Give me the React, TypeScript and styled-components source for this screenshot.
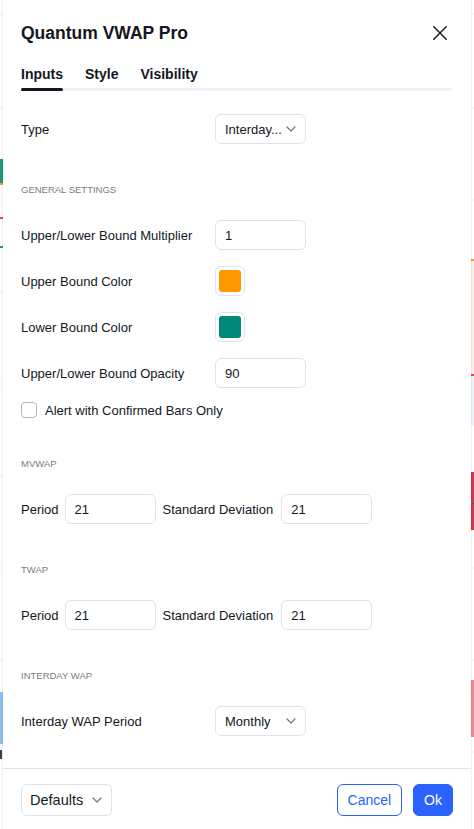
import React from "react";
import styled, { createGlobalStyle } from "styled-components";

const GlobalStyle = createGlobalStyle`
  html, body {
    margin: 0;
    padding: 0;
    background: #ffffff;
  }
  body {
    font-family: "Liberation Sans", Arial, sans-serif;
    color: #131722;
    overflow: hidden;
  }
  * {
    box-sizing: border-box;
  }
`;

const Page = styled.div`
  position: relative;
  width: 474px;
  height: 829px;
  overflow: hidden;
`;

const Backdrop = styled.svg`
  position: absolute;
  top: 0;
  left: 0;
  z-index: 0;
`;

const Dialog = styled.div`
  position: relative;
  z-index: 1;
  margin: 0 3px;
  height: 829px;
  background: #ffffff;
  box-shadow: 0 0 2px rgba(19, 23, 34, 0.18);
  display: flex;
  flex-direction: column;
`;

const Header = styled.div`
  display: flex;
  align-items: center;
  justify-content: space-between;
  padding: 20px 24px 0 18px;
  height: 46px;
`;

const Title = styled.h2`
  margin: 0;
  font-size: 17.5px;
  line-height: 26px;
  font-weight: 700;
  color: #131722;
`;

const CloseButton = styled.button`
  border: none;
  background: none;
  padding: 0;
  width: 14px;
  height: 14px;
  display: flex;
  cursor: pointer;
`;

const Tabs = styled.div`
  position: relative;
  margin: 18px 19px 0 18px;
  display: flex;
  gap: 22px;
  &::after {
    content: "";
    position: absolute;
    left: 0;
    right: 0;
    bottom: 0;
    height: 3px;
    background: #f0f3fa;
    border-radius: 2px;
  }
`;

const Tab = styled.div<{ $active?: boolean }>`
  position: relative;
  z-index: 1;
  font-size: 14px;
  font-weight: 700;
  line-height: 20px;
  padding-bottom: 7px;
  color: #131722;
  &::after {
    content: "";
    position: absolute;
    left: 0;
    right: 0;
    bottom: 0;
    height: 3px;
    border-radius: 2px;
    background: ${(p) => (p.$active ? "#131722" : "transparent")};
  }
`;

const Body = styled.div`
  flex: 1;
  padding: 23px 18px 0 18px;
  display: flex;
  flex-direction: column;
`;

const Section = styled.div<{ $top?: number }>`
  margin-top: ${(p) => p.$top ?? 38}px;
  display: flex;
  flex-direction: column;
`;

const SectionTitle = styled.div`
  font-size: 9.5px;
  line-height: 16px;
  text-transform: uppercase;
  color: #787b86;
  margin-bottom: 22px;
`;

const Rows = styled.div`
  display: flex;
  flex-direction: column;
  gap: 16px;
`;

const Row = styled.div`
  display: flex;
  align-items: center;
  height: 30px;
`;

const Label = styled.div`
  width: 194px;
  font-size: 13px;
  color: #131722;
`;

const InlineLabel = styled.div<{ $space?: number }>`
  font-size: 13px;
  color: #131722;
  margin-right: ${(p) => p.$space ?? 8}px;
`;

const Input = styled.div<{ $after?: number }>`
  width: 91px;
  height: 30px;
  border: 1px solid #e0e3eb;
  border-radius: 6px;
  padding: 0 9px;
  display: flex;
  align-items: center;
  font-size: 13px;
  color: #131722;
  margin-right: ${(p) => p.$after ?? 0}px;
`;

const Select = styled(Input)`
  justify-content: space-between;
  padding-right: 9px;
`;

const Swatch = styled.div`
  width: 30px;
  height: 30px;
  border: 1px solid #e0e3eb;
  border-radius: 6px;
  padding: 3px;
`;

const SwatchColor = styled.div<{ $color: string }>`
  width: 100%;
  height: 100%;
  border-radius: 3px;
  background: ${(p) => p.$color};
`;

const CheckRow = styled.label`
  margin-top: 10px;
  height: 24px;
  display: flex;
  align-items: center;
  gap: 8px;
  font-size: 13px;
  color: #131722;
`;

const CheckBox = styled.span`
  width: 16px;
  height: 16px;
  border: 1px solid #b2b5be;
  border-radius: 4px;
  display: inline-block;
`;

const Footer = styled.div`
  border-top: 1px solid #e0e3eb;
  padding: 15px 18px 13px 18px;
  display: flex;
  align-items: center;
`;

const FooterSelect = styled.div`
  width: 91px;
  height: 32px;
  border: 1px solid #e0e3eb;
  border-radius: 6px;
  padding: 0 9px 0 8px;
  display: flex;
  align-items: center;
  justify-content: space-between;
  font-size: 14.5px;
  color: #131722;
`;

const Actions = styled.div`
  margin-left: auto;
  display: flex;
  gap: 11px;
`;

const Button = styled.button<{ $primary?: boolean }>`
  height: 32px;
  padding: 0 10px;
  border-radius: 6px;
  font-family: "Liberation Sans", Arial, sans-serif;
  font-size: 14px;
  border: 1px solid #2962ff;
  background: ${(p) => (p.$primary ? "#2962ff" : "#ffffff")};
  color: ${(p) => (p.$primary ? "#ffffff" : "#2962ff")};
  cursor: pointer;
`;

const Chevron = () => (
  <svg width="10" height="6" viewBox="0 0 10 6" fill="none">
    <path d="M1 1l4 4 4-4" stroke="#787b86" strokeWidth="1.3" strokeLinecap="round" strokeLinejoin="round" />
  </svg>
);

const ChartBackdrop = () => (
  <Backdrop width="474" height="829" viewBox="0 0 474 829">
    <rect width="474" height="829" fill="#ffffff" />
    {[14, 108, 200, 292, 384, 476, 568, 660, 752].map((y) => (
      <line key={y} x1="0" x2="474" y1={y} y2={y} stroke="#eef0f4" strokeWidth="1" />
    ))}
    <rect x="0" y="159" width="3" height="24" fill="#1b9a7c" />
    <rect x="0" y="183" width="3" height="2" fill="#f0a030" />
    <rect x="0" y="217" width="3" height="2" fill="#e04a4a" />
    <rect x="0" y="246" width="3" height="2" fill="#22997a" />
    <rect x="0" y="692" width="3" height="52" fill="#8ec0f5" />
    <rect x="0" y="750" width="2" height="9" fill="#3a3f4a" />
    <rect x="471" y="259" width="3" height="2" fill="#f0a030" />
    <rect x="471" y="261" width="3" height="113" fill="#fbefe4" />
    <rect x="471" y="374" width="3" height="2" fill="#e04a4a" />
    <rect x="471" y="376" width="3" height="50" fill="#eef2f6" />
    <rect x="471" y="472" width="3" height="58" fill="#d8344c" />
    <rect x="471" y="503" width="3" height="1" fill="#2f6b4f" />
    <rect x="471" y="680" width="3" height="57" fill="#f2868d" />
  </Backdrop>
);

const PeriodRow = () => (
  <Row>
    <InlineLabel $space={6}>Period</InlineLabel>
    <Input $after={7}>21</Input>
    <InlineLabel $space={8}>Standard Deviation</InlineLabel>
    <Input>21</Input>
  </Row>
);

export default function App() {
  return (
    <Page>
      <GlobalStyle />
      <ChartBackdrop />
      <Dialog>
        <Header>
          <Title>Quantum VWAP Pro</Title>
          <CloseButton aria-label="Close">
            <svg width="14" height="14" viewBox="0 0 14 14" fill="none">
              <path d="M0.8 0.8l12.4 12.4M13.2 0.8L0.8 13.2" stroke="#131722" strokeWidth="1.4" strokeLinecap="round" />
            </svg>
          </CloseButton>
        </Header>

        <Tabs>
          <Tab $active>Inputs</Tab>
          <Tab>Style</Tab>
          <Tab>Visibility</Tab>
        </Tabs>

        <Body>
          <Row>
            <Label>Type</Label>
            <Select>
              <span>Interday...</span>
              <Chevron />
            </Select>
          </Row>

          <Section>
            <SectionTitle>General Settings</SectionTitle>
            <Rows>
              <Row>
                <Label>Upper/Lower Bound Multiplier</Label>
                <Input>1</Input>
              </Row>
              <Row>
                <Label>Upper Bound Color</Label>
                <Swatch>
                  <SwatchColor $color="#ff9800" />
                </Swatch>
              </Row>
              <Row>
                <Label>Lower Bound Color</Label>
                <Swatch>
                  <SwatchColor $color="#00897b" />
                </Swatch>
              </Row>
              <Row>
                <Label>Upper/Lower Bound Opacity</Label>
                <Input>90</Input>
              </Row>
            </Rows>
            <CheckRow>
              <CheckBox />
              Alert with Confirmed Bars Only
            </CheckRow>
          </Section>

          <Section $top={34}>
            <SectionTitle>MVWAP</SectionTitle>
            <PeriodRow />
          </Section>

          <Section>
            <SectionTitle>TWAP</SectionTitle>
            <PeriodRow />
          </Section>

          <Section>
            <SectionTitle>Interday WAP</SectionTitle>
            <Row>
              <Label>Interday WAP Period</Label>
              <Select>
                <span>Monthly</span>
                <Chevron />
              </Select>
            </Row>
          </Section>
        </Body>

        <Footer>
          <FooterSelect>
            <span>Defaults</span>
            <Chevron />
          </FooterSelect>
          <Actions>
            <Button>Cancel</Button>
            <Button $primary>Ok</Button>
          </Actions>
        </Footer>
      </Dialog>
    </Page>
  );
}
